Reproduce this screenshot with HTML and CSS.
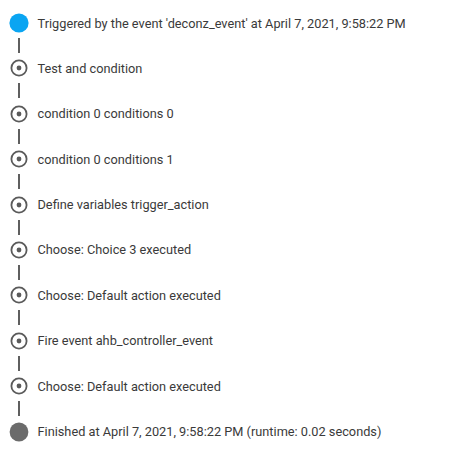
FILE: index.html
```html
<!DOCTYPE html>
<html>
<head>
<meta charset="utf-8">
<link rel="stylesheet" href="styles.css">
</head>
<body>
<div class="timeline">
  <div class="row">
    <span class="icon"><svg viewBox="0 0 20 20" width="20" height="20"><circle cx="10" cy="10" r="9.6" fill="#0aa5f2"/></svg></span>
    <span class="label">Triggered by the event 'deconz_event' at April 7, 2021, 9:58:22 PM</span>
  </div>
  <div class="conn"><span class="line"></span></div>
  <div class="row">
    <span class="icon"><svg viewBox="0 0 20 20" width="20" height="20"><circle cx="10" cy="10" r="7.6" fill="none" stroke="#5a5a5a" stroke-width="1.8"/><circle cx="10" cy="10" r="2.4" fill="#5a5a5a"/></svg></span>
    <span class="label">Test and condition</span>
  </div>
  <div class="conn"><span class="line"></span></div>
  <div class="row">
    <span class="icon"><svg viewBox="0 0 20 20" width="20" height="20"><circle cx="10" cy="10" r="7.6" fill="none" stroke="#5a5a5a" stroke-width="1.8"/><circle cx="10" cy="10" r="2.4" fill="#5a5a5a"/></svg></span>
    <span class="label">condition 0 conditions 0</span>
  </div>
  <div class="conn"><span class="line"></span></div>
  <div class="row">
    <span class="icon"><svg viewBox="0 0 20 20" width="20" height="20"><circle cx="10" cy="10" r="7.6" fill="none" stroke="#5a5a5a" stroke-width="1.8"/><circle cx="10" cy="10" r="2.4" fill="#5a5a5a"/></svg></span>
    <span class="label">condition 0 conditions 1</span>
  </div>
  <div class="conn"><span class="line"></span></div>
  <div class="row">
    <span class="icon"><svg viewBox="0 0 20 20" width="20" height="20"><circle cx="10" cy="10" r="7.6" fill="none" stroke="#5a5a5a" stroke-width="1.8"/><circle cx="10" cy="10" r="2.4" fill="#5a5a5a"/></svg></span>
    <span class="label">Define variables trigger_action</span>
  </div>
  <div class="conn"><span class="line"></span></div>
  <div class="row">
    <span class="icon"><svg viewBox="0 0 20 20" width="20" height="20"><circle cx="10" cy="10" r="7.6" fill="none" stroke="#5a5a5a" stroke-width="1.8"/><circle cx="10" cy="10" r="2.4" fill="#5a5a5a"/></svg></span>
    <span class="label">Choose: Choice 3 executed</span>
  </div>
  <div class="conn"><span class="line"></span></div>
  <div class="row">
    <span class="icon"><svg viewBox="0 0 20 20" width="20" height="20"><circle cx="10" cy="10" r="7.6" fill="none" stroke="#5a5a5a" stroke-width="1.8"/><circle cx="10" cy="10" r="2.4" fill="#5a5a5a"/></svg></span>
    <span class="label">Choose: Default action executed</span>
  </div>
  <div class="conn"><span class="line"></span></div>
  <div class="row">
    <span class="icon"><svg viewBox="0 0 20 20" width="20" height="20"><circle cx="10" cy="10" r="7.6" fill="none" stroke="#5a5a5a" stroke-width="1.8"/><circle cx="10" cy="10" r="2.4" fill="#5a5a5a"/></svg></span>
    <span class="label">Fire event ahb_controller_event</span>
  </div>
  <div class="conn"><span class="line"></span></div>
  <div class="row">
    <span class="icon"><svg viewBox="0 0 20 20" width="20" height="20"><circle cx="10" cy="10" r="7.6" fill="none" stroke="#5a5a5a" stroke-width="1.8"/><circle cx="10" cy="10" r="2.4" fill="#5a5a5a"/></svg></span>
    <span class="label">Choose: Default action executed</span>
  </div>
  <div class="conn"><span class="line"></span></div>
  <div class="row">
    <span class="icon"><svg viewBox="0 0 20 20" width="20" height="20"><circle cx="10" cy="10" r="9.4" fill="#6b6b6b"/></svg></span>
    <span class="label">Finished at April 7, 2021, 9:58:22 PM (runtime: 0.02 seconds)</span>
  </div>
</div>
</body>
</html>
```

FILE: styles.css
```css
html, body {
  margin: 0;
  padding: 0;
  background: #ffffff;
}
body {
  font-family: Roboto, "Liberation Sans", sans-serif;
  font-size: 12.75px;
  color: #3a3a3a;
}
.timeline {
  padding: 11px 0 0 9px;
  display: flex;
  flex-direction: column;
}
.row {
  display: flex;
  align-items: center;
  height: 24px;
  gap: 8.5px;
}
.icon {
  width: 20px;
  height: 20px;
  flex: none;
  display: flex;
}
.label {
  white-space: nowrap;
}
.conn {
  height: 21.4px;
  width: 20px;
  display: flex;
  justify-content: center;
  padding-top: 3px;
  box-sizing: border-box;
}
.line {
  width: 2px;
  height: 15px;
  background: #5f5f5f;
}
```
